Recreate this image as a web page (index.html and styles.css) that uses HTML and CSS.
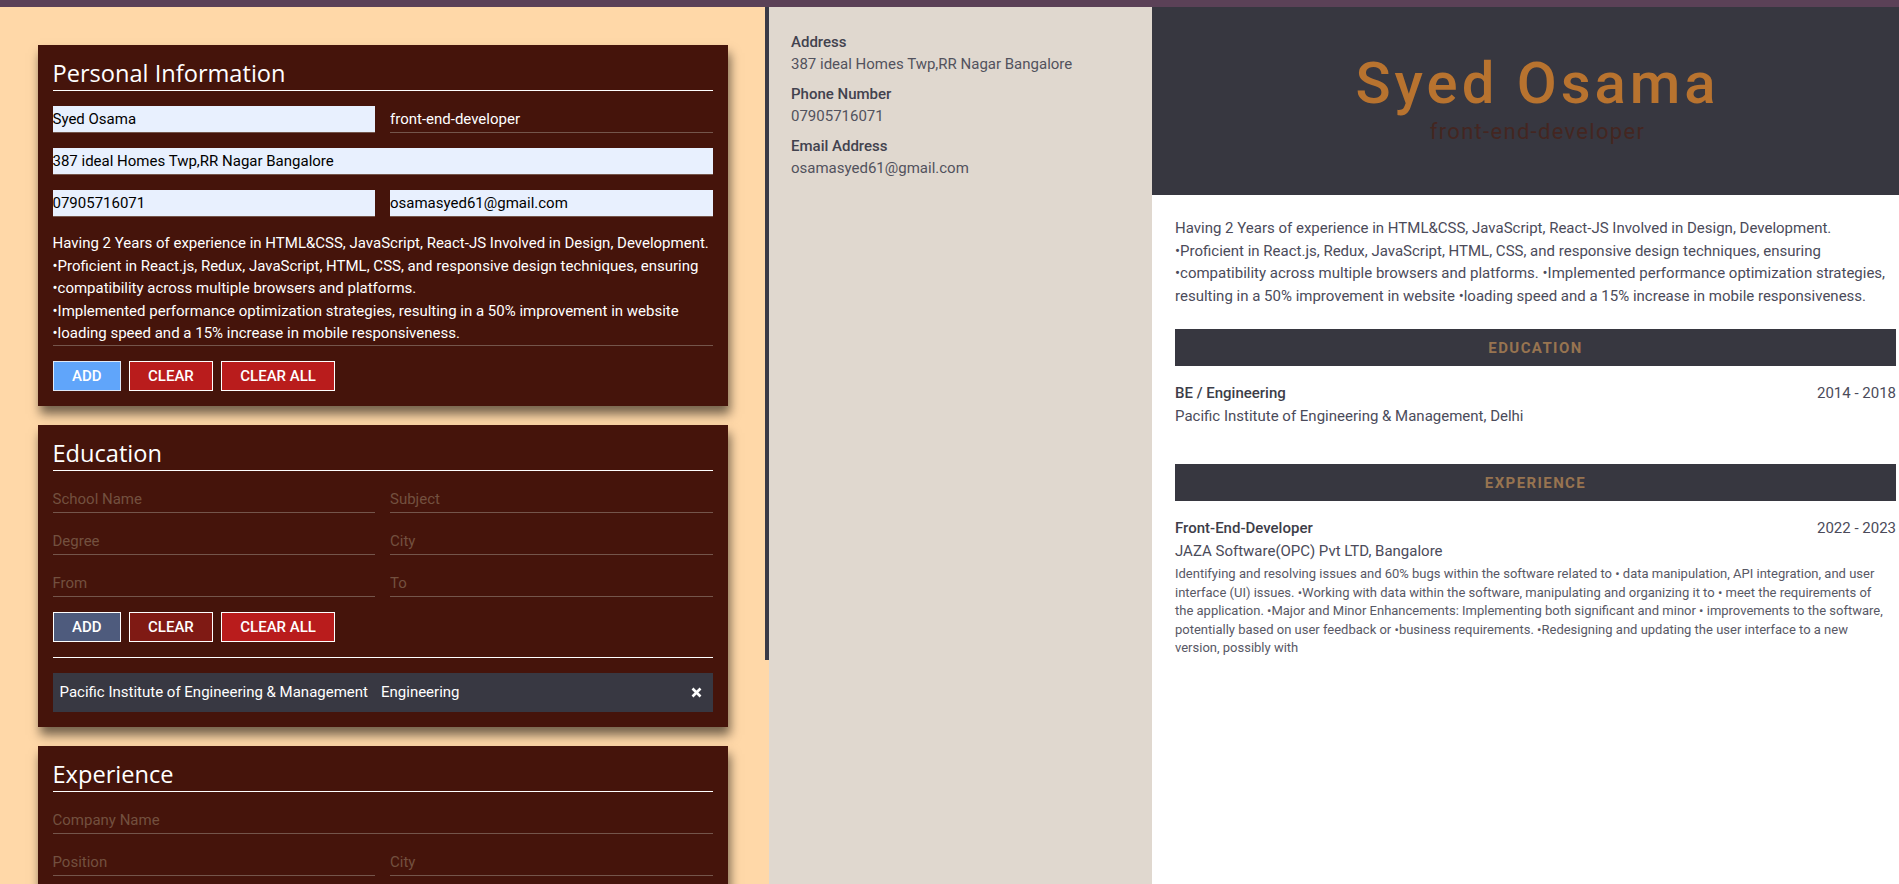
FILE: index.html
```html
<!DOCTYPE html>
<html lang="en">
<head>
<meta charset="utf-8">
<title>Resume Builder</title>
<link rel="stylesheet" href="styles.css">
</head>
<body>
<div class="topbar"></div>
<div class="app">
  <div class="editor">
    <div class="editor-scroll">
      <section class="card">
        <h2 class="card-title">Personal Information</h2>
        <div class="fields">
          <input class="field autofill" type="text" value="Syed Osama">
          <input class="field" type="text" value="front-end-developer">
          <input class="field autofill full" type="text" value="387 ideal Homes Twp,RR Nagar Bangalore">
          <input class="field autofill" type="text" value="07905716071">
          <input class="field autofill" type="text" value="osamasyed61@gmail.com">
          <textarea class="field area full">Having 2 Years of experience in HTML&amp;CSS, JavaScript, React-JS Involved in Design, Development.
•Proficient in React.js, Redux, JavaScript, HTML, CSS, and responsive design techniques, ensuring
•compatibility across multiple browsers and platforms.
•Implemented performance optimization strategies, resulting in a 50% improvement in website
•loading speed and a 15% increase in mobile responsiveness.</textarea>
        </div>
        <div class="actions">
          <button class="btn btn-blue">Add</button>
          <button class="btn btn-red">Clear</button>
          <button class="btn btn-red">Clear All</button>
        </div>
      </section>

      <section class="card">
        <h2 class="card-title">Education</h2>
        <div class="fields">
          <input class="field" type="text" placeholder="School Name">
          <input class="field" type="text" placeholder="Subject">
          <input class="field" type="text" placeholder="Degree">
          <input class="field" type="text" placeholder="City">
          <input class="field" type="text" placeholder="From">
          <input class="field" type="text" placeholder="To">
        </div>
        <div class="actions">
          <button class="btn btn-slate">Add</button>
          <button class="btn btn-dark">Clear</button>
          <button class="btn btn-red">Clear All</button>
        </div>
        <hr class="divider">
        <div class="list-item">
          <span>Pacific Institute of Engineering &amp; Management</span>
          <span>Engineering</span>
          <svg class="remove" width="11" height="11" viewBox="0 0 11 11" aria-hidden="true"><path d="M1.5 1.5 L9.5 9.5 M9.5 1.5 L1.5 9.5" stroke="#fff" stroke-width="2.6" fill="none"/></svg>
        </div>
      </section>

      <section class="card">
        <h2 class="card-title">Experience</h2>
        <div class="fields">
          <input class="field full" type="text" placeholder="Company Name">
          <input class="field" type="text" placeholder="Position">
          <input class="field" type="text" placeholder="City">
          <input class="field" type="text">
          <input class="field" type="text">
        </div>
      </section>
    </div>
    <div class="scroll-track"><div class="scroll-thumb"></div></div>
  </div>

  <div class="resume">
    <aside class="contact">
      <div class="contact-label">Address</div>
      <div class="contact-value">387 ideal Homes Twp,RR Nagar Bangalore</div>
      <div class="contact-label">Phone Number</div>
      <div class="contact-value">07905716071</div>
      <div class="contact-label">Email Address</div>
      <div class="contact-value">osamasyed61@gmail.com</div>
    </aside>
    <main class="sheet">
      <header class="sheet-header">
        <h1 class="name">Syed Osama</h1>
        <p class="role">front-end-developer</p>
      </header>
      <div class="sheet-body">
        <p class="summary">Having 2 Years of experience in HTML&amp;CSS, JavaScript, React-JS Involved in Design, Development. •Proficient in React.js, Redux, JavaScript, HTML, CSS, and responsive design techniques, ensuring •compatibility across multiple browsers and platforms. •Implemented performance optimization strategies, resulting in a 50% improvement in website •loading speed and a 15% increase in mobile responsiveness.</p>

        <div class="section-bar">Education</div>
        <div class="entry">
          <div class="entry-head">
            <span class="entry-title">BE / Engineering</span>
            <span class="entry-date">2014 - 2018</span>
          </div>
          <div class="entry-sub">Pacific Institute of Engineering &amp; Management, Delhi</div>
        </div>

        <div class="section-bar">Experience</div>
        <div class="entry">
          <div class="entry-head">
            <span class="entry-title">Front-End-Developer</span>
            <span class="entry-date">2022 - 2023</span>
          </div>
          <div class="entry-sub">JAZA Software(OPC) Pvt LTD, Bangalore</div>
          <p class="entry-desc">Identifying and resolving issues and 60% bugs within the software related to • data manipulation, API integration, and user interface (UI) issues. •Working with data within the software, manipulating and organizing it to • meet the requirements of the application. •Major and Minor Enhancements: Implementing both significant and minor • improvements to the software, potentially based on user feedback or •business requirements. •Redesigning and updating the user interface to a new version, possibly with</p>
        </div>
      </div>
    </main>
  </div>
</div>
</body>
</html>
```

FILE: styles.css
```css
* {
  box-sizing: border-box;
}

body {
  margin: 0;
  width: 1899px;
  height: 884px;
  overflow: hidden;
  font-family: Roboto, "Liberation Sans", Arial, sans-serif;
  font-size: 15px;
}

.topbar {
  height: 7px;
  background: #5b4157;
}

.app {
  display: flex;
  width: 1919px;
  height: 877px;
}

/* ---------- editor column ---------- */
.editor {
  flex: none;
  display: flex;
  width: 769px;
  height: 877px;
  background: #ffd8a8;
  overflow: hidden;
}

.editor-scroll {
  width: 765px;
  padding-top: 38px;
  display: flex;
  flex-direction: column;
  align-items: center;
  gap: 19px;
}

.scroll-track {
  width: 4px;
  flex: none;
}

.scroll-thumb {
  height: 653px;
  background: #3a3a46;
}

.card {
  flex: none;
  width: 690px;
  padding: 12px 15px 15px;
  background: #45140b;
  box-shadow: 2px 8px 10px rgba(0, 0, 0, 0.55);
}

.card-title {
  margin: 0 0 15px;
  font-family: "Open Sans", "Liberation Sans", sans-serif;
  font-weight: 400;
  font-size: 23.6px;
  line-height: 33px;
  color: #fff;
  border-bottom: 1px solid #fff;
}

.fields {
  display: grid;
  grid-template-columns: 1fr 1fr;
  gap: 15px;
}

.full {
  grid-column: 1 / -1;
}

.field {
  display: block;
  width: 100%;
  height: 27px;
  margin: 0;
  padding: 0;
  border: 0;
  border-bottom: 1px solid #74554b;
  border-radius: 0;
  background: transparent;
  color: #fff;
  font-family: Roboto, "Liberation Sans", Arial, sans-serif;
  font-size: 15px;
  outline: none;
}

.field::placeholder {
  color: #73503f;
  opacity: 1;
}

.field.autofill {
  background: #e8f0fe;
  color: #000;
}

.area {
  height: 113.5px;
  line-height: 22.5px;
  resize: none;
  overflow: hidden;
  white-space: pre;
}

.actions {
  display: flex;
  gap: 7.5px;
  margin-top: 15px;
}

.btn {
  height: 30px;
  padding: 0 18.5px;
  border: 1px solid #fff;
  border-radius: 0;
  color: #fff;
  font-family: Roboto, "Liberation Sans", Arial, sans-serif;
  font-weight: 500;
  font-size: 15px;
  text-transform: uppercase;
  background: #b91c1c;
  cursor: pointer;
}

.btn-blue {
  background: #60a5fa;
  border-color: #dfe9f7;
}

.btn-red {
  background: #b91c1c;
}

.btn-slate {
  background: #4e5b7d;
}

.btn-dark {
  background: #7f1a14;
}

.divider {
  height: 0;
  margin: 15px 0;
  border: 0;
  border-top: 1px solid #fff;
}

.list-item {
  display: flex;
  align-items: center;
  gap: 13px;
  height: 39px;
  padding: 0 11px 0 7px;
  background: #383842;
  color: #fff;
  font-size: 15px;
}

.remove {
  margin-left: auto;
}

/* ---------- resume ---------- */
.resume {
  flex: none;
  display: grid;
  grid-template-columns: 383px 767px;
  height: 877px;
}

.contact {
  background: #e0d8cf;
  padding: 24px 22px;
}

.contact-label {
  font-weight: 500;
  line-height: 22px;
  color: #42424e;
}

.contact-value {
  line-height: 22px;
  margin-bottom: 8px;
  color: #52525d;
}

.sheet {
  background: #fff;
}

.sheet-header {
  height: 188px;
  padding-top: 42px;
  padding-left: 4px;
  background: #373740;
  text-align: center;
}

.name {
  margin: 0;
  font-weight: 500;
  font-size: 58px;
  line-height: normal;
  letter-spacing: 4px;
  color: #b8732f;
}

.role {
  margin: 2px 0 0;
  font-size: 22px;
  line-height: normal;
  letter-spacing: 1.3px;
  color: #442621;
}

.sheet-body {
  padding: 22px 23px 0;
  color: #4b4b5a;
}

.summary {
  margin: 0 0 1px;
  line-height: 22.5px;
}

.section-bar {
  display: flex;
  align-items: center;
  justify-content: center;
  height: 37px;
  margin-top: 22px;
  background: #373740;
  color: #977450;
  font-weight: 700;
  font-size: 15px;
  letter-spacing: 1.4px;
  text-transform: uppercase;
}

.entry {
  padding: 16px 0 15px;
}

.entry-head {
  display: flex;
  justify-content: space-between;
  line-height: 22.5px;
}

.entry-title {
  font-weight: 500;
  color: #3d3d48;
}

.entry-date {
  color: #4b4b5a;
}

.entry-sub {
  line-height: 22.5px;
}

.entry-desc {
  margin: 3px 0 0;
  padding-right: 6px;
  font-size: 13px;
  line-height: 18.6px;
  color: #585865;
}
```
